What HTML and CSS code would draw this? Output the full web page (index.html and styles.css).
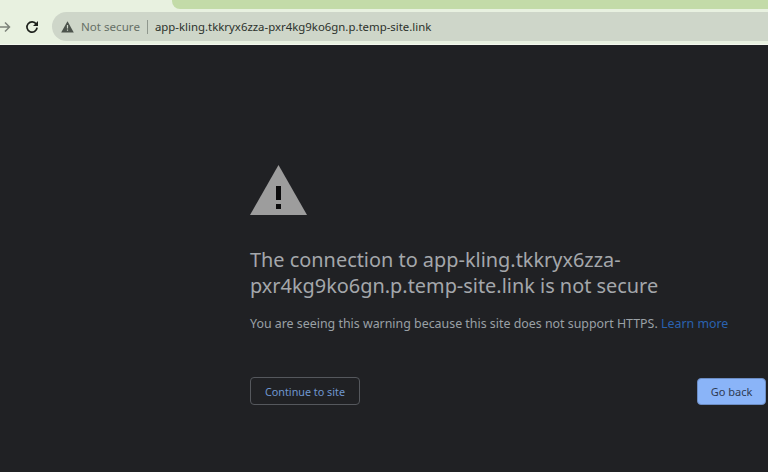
FILE: index.html
```html
<!DOCTYPE html>
<html lang="en">
    <head>
        <meta charset="UTF-8" />
        <meta name="viewport" content="width=device-width, initial-scale=1.0" />
        <link rel="stylesheet" href="styles.css">
        <title>Not secure</title>
    </head>
    <body>
        <header class="browser-bar">
            <div class="tab-strip">
                <div class="active-tab"></div>
            </div>
            <div class="toolbar">
                <svg class="nav-icon forward" viewBox="0 0 12 12" aria-hidden="true">
                    <path d="M0 6H10.5M6 1.5L10.5 6L6 10.5" fill="none" stroke="#7d837a" stroke-width="1.5" />
                </svg>
                <svg class="nav-icon reload" viewBox="0 0 14 14" aria-hidden="true">
                    <path d="M11.3 4.2A5.1 5.1 0 1 0 12.1 7.6" fill="none" stroke="#1d211c" stroke-width="1.7" />
                    <path d="M13 1V6H8Z" fill="#1d211c" />
                </svg>
                <div class="omnibox">
                    <svg class="warn-small" viewBox="0 0 13 12" aria-hidden="true">
                        <path d="M6.5 0.3L12.8 11.5H0.2Z" fill="#4c534c" />
                        <path d="M5.9 4H7.1V7.6H5.9ZM5.9 8.5H7.1V9.8H5.9Z" fill="#ced6c9" />
                    </svg>
                    <span class="not-secure">Not secure</span>
                    <span class="url">app-kling.tkkryx6zza-pxr4kg9ko6gn.p.temp-site.link</span>
                </div>
            </div>
        </header>
        <main class="warning">
            <svg class="warn-big" viewBox="0 0 57 50" aria-hidden="true">
                <path d="M28.5 0L57 50H0Z" fill="#9d9d9d" />
                <path d="M26 21H31V35H26ZM26 39H31V44H26Z" fill="#0c0c0d" />
            </svg>
            <h1>The connection to app-kling.tkkryx6zza-pxr4kg9ko6gn.p.temp-site.link is not secure</h1>
            <p class="explain">You are seeing this warning because this site does not support HTTPS. <a href="#">Learn more</a></p>
            <div class="actions">
                <button class="btn-continue">Continue to site</button>
                <button class="btn-back">Go back</button>
            </div>
        </main>
    </body>
</html>
```

FILE: styles.css
```css
* {
    margin: 0;
    padding: 0;
    box-sizing: border-box;
}
:root {
    --page: #202124;
    --bar: #e8f1e0;
    --font-fam: 'Noto Sans', sans-serif;
}
html,
body {
    height: 100%;
    overflow: hidden;
}
body {
    background-color: var(--page);
    font-family: var(--font-fam);
}

/* ======= browser bar ======= */
.browser-bar {
    height: 45px;
    background-color: var(--bar);
    border-bottom: 1px solid #f4f8ef;
}
.tab-strip {
    height: 12px;
    padding-left: 172px;
    border-bottom: 3px solid transparent;
}
.active-tab {
    height: 9px;
    background-color: #c3dba8;
    border-bottom-left-radius: 8px;
}
.toolbar {
    display: flex;
    align-items: center;
    height: 29px;
}
.nav-icon.forward {
    width: 12px;
    height: 12px;
    margin-left: -1px;
}
.nav-icon.reload {
    width: 14px;
    height: 14px;
    margin-left: 14px;
}
.omnibox {
    display: flex;
    align-items: center;
    flex: 1;
    height: 29px;
    margin-left: 13px;
    padding-left: 9px;
    background-color: #ced6c9;
    border-radius: 15px 0 0 15px;
    font-size: 11.6px;
}
.warn-small {
    width: 13px;
    height: 12px;
}
.not-secure {
    margin-left: 7px;
    padding-right: 7px;
    color: #667066;
    border-right: 1px solid #8f978d;
    line-height: 14px;
}
.url {
    margin-left: 7px;
    font-size: 11.4px;
    color: #2c322c;
}

/* ======= warning ======= */
.warning {
    width: 518px;
    margin-left: 250px;
    padding-top: 120px;
    color: #9aa0a6;
}
.warn-big {
    display: block;
    width: 57px;
    height: 50px;
}
h1 {
    width: 420px;
    margin-top: 32px;
    font-size: 19.9px;
    font-weight: 400;
    line-height: 26px;
    color: #a4a7ab;
}
.explain {
    margin-top: 16px;
    font-size: 12.4px;
    line-height: 18px;
    white-space: nowrap;
}
.explain a {
    color: #2a62b0;
    text-decoration: none;
}
.actions {
    display: flex;
    justify-content: space-between;
    align-items: center;
    margin-top: 44px;
}
button {
    height: 28px;
    border-radius: 4px;
    font-family: var(--font-fam);
}
.btn-continue {
    width: 110px;
    background-color: transparent;
    border: 1px solid #55585d;
    font-size: 10.8px;
    color: #6f96cf;
}
.btn-back {
    width: 69px;
    height: 27px;
    margin-right: 2px;
    background-color: #8ab4f8;
    border: 1px solid #6c8dc4;
    font-size: 11px;
    color: #2e3a52;
}
```
